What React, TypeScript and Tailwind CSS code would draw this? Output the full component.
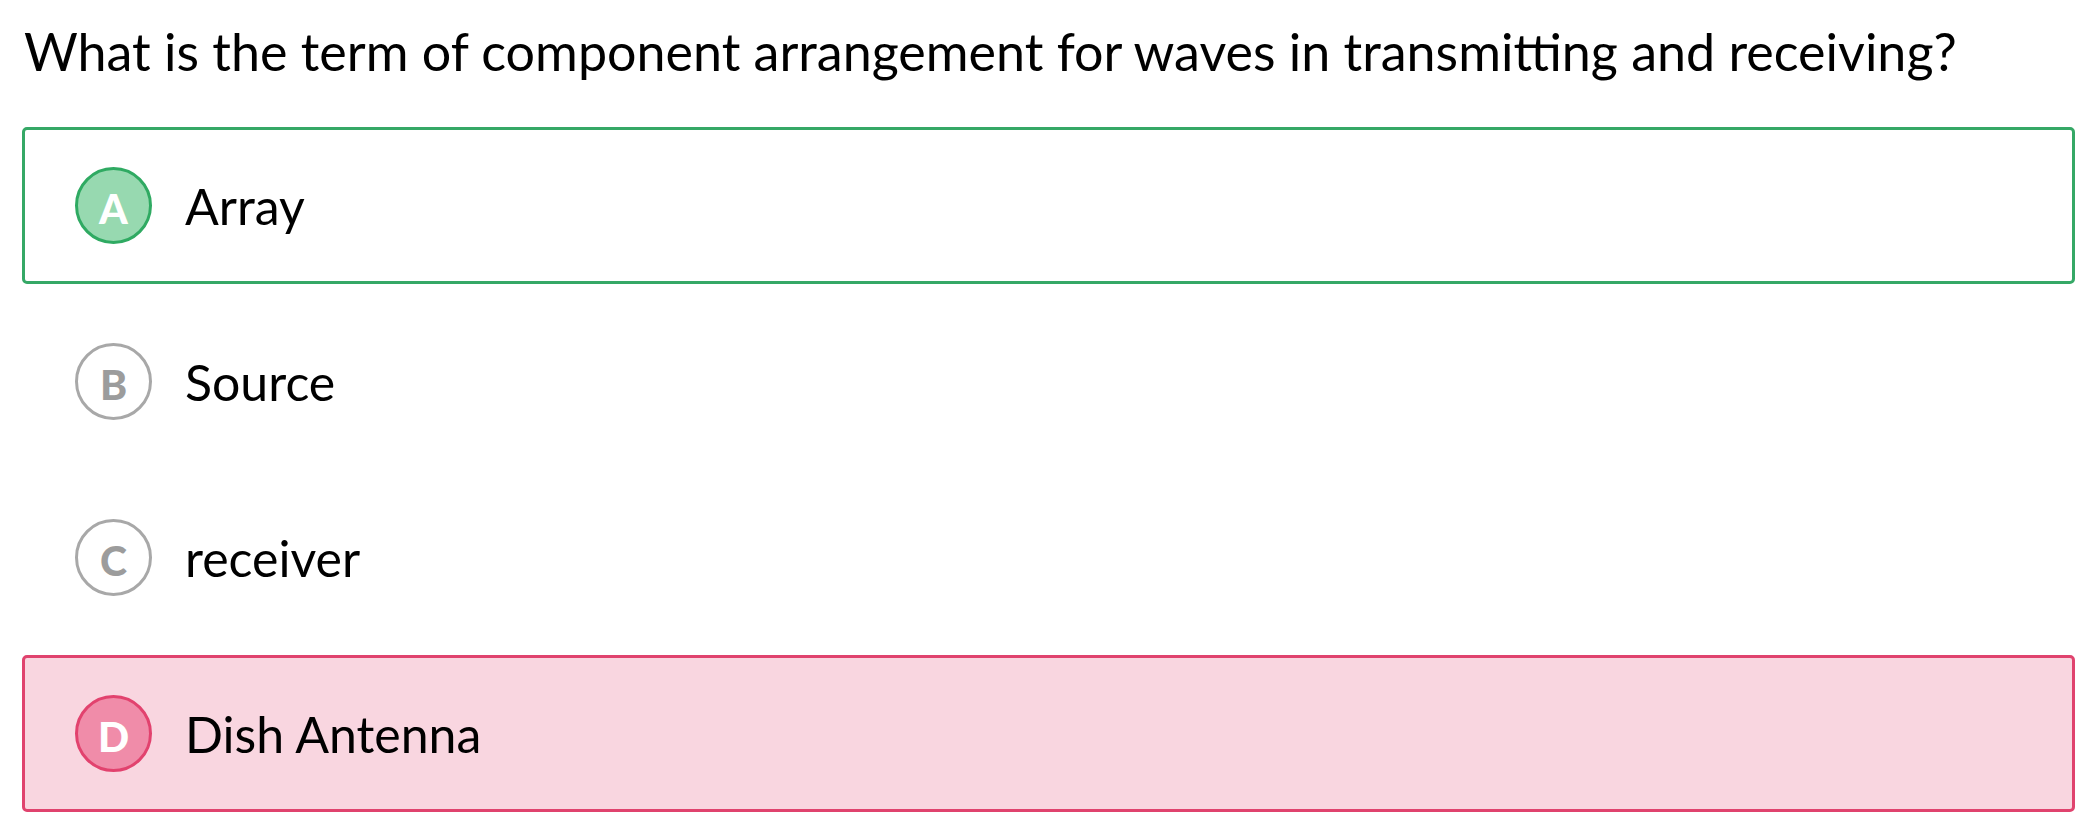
import React from "react";

type Choice = {
  key: string;
  label: string;
  state: "correct" | "wrong" | "idle";
};

const choices: Choice[] = [
  { key: "A", label: "Array", state: "correct" },
  { key: "B", label: "Source", state: "idle" },
  { key: "C", label: "receiver", state: "idle" },
  { key: "D", label: "Dish Antenna", state: "wrong" },
];

const rowStyles = {
  correct: "border-[#35a866] bg-white",
  wrong: "border-[#e0436e] bg-[#f9d6e0]",
  idle: "border-transparent bg-white",
};

const badgeStyles = {
  correct: "border-[#2faa62] bg-[#97d9b0] text-white",
  wrong: "border-[#e2426e] bg-[#f08ca9] text-white",
  idle: "border-[#a8a8a8] bg-white text-[#9c9c9c]",
};

function Option({ choice }: { choice: Choice }) {
  return (
    <div
      className={`flex h-[157px] items-center rounded-[5px] border-[3px] pl-[50px] ${rowStyles[choice.state]}`}
    >
      <div
        className={`flex h-[77px] w-[77px] shrink-0 items-center justify-center rounded-full border-[3px] text-[41px] font-black leading-none ${badgeStyles[choice.state]}`}
      >
        <span className="mt-[6px]">{choice.key}</span>
      </div>
      <span className="ml-[33px] text-[50px] leading-none text-black">
        {choice.label}
      </span>
    </div>
  );
}

export default function App() {
  return (
    <div
      className="min-h-screen w-full bg-white pl-[22px] pr-[3px]"
      style={{ fontFamily: 'Lato, "Open Sans", sans-serif' }}
    >
      <div className="h-[127px] pl-[2px] pt-[25px]">
        <h1 className="text-[52px] font-normal leading-none text-black">
          What is the term of component arrangement for waves in transmitting and receiving?
        </h1>
      </div>
      <div className="flex flex-col gap-[19px]">
        {choices.map((c) => (
          <Option key={c.key} choice={c} />
        ))}
      </div>
    </div>
  );
}
